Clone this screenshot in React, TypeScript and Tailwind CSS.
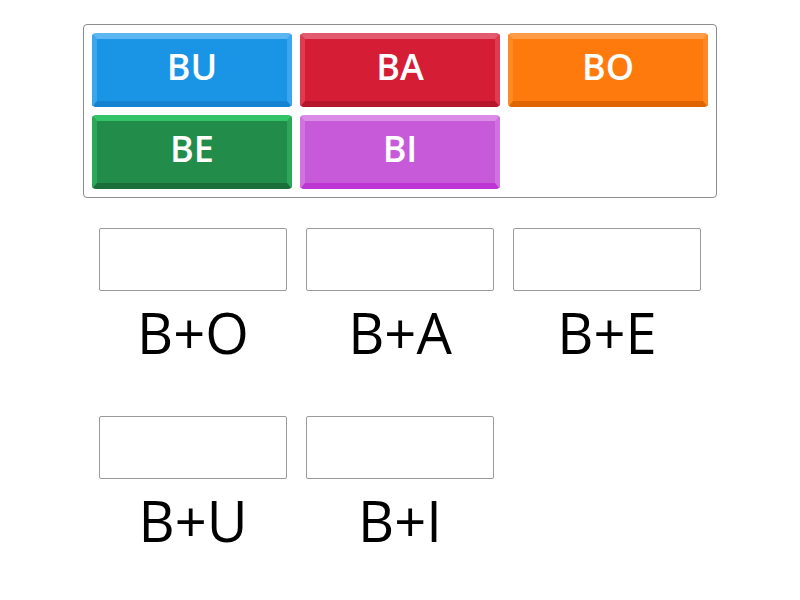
const tiles = [
  { label: 'BU', cls: 'bg-[#1a95e6] border-t-[#5cb6f1] border-x-[#3aa6ee] border-b-[#1583d2]' },
  { label: 'BA', cls: 'bg-[#d61d36] border-t-[#e35a6e] border-x-[#e03a50] border-b-[#b5162a]' },
  { label: 'BO', cls: 'bg-[#ff7a0c] border-t-[#ff9c45] border-x-[#ff8a25] border-b-[#de6500]' },
  { label: 'BE', cls: 'bg-[#228d4a] border-t-[#34c468] border-x-[#2aa858] border-b-[#1b6e39]' },
  { label: 'BI', cls: 'bg-[#c75ad9] border-t-[#da8ce7] border-x-[#d172e1] border-b-[#bd36d3]' },
]

const targets = ['B+O', 'B+A', 'B+E', 'B+U', 'B+I']

export default function App() {
  return (
    <div className="w-[800px] h-[600px] bg-white pt-6" style={{ fontFamily: '"Open Sans", "Noto Sans", sans-serif' }}>
      <div className="mx-auto w-[634px] h-[174px] border border-[#8c8c8c] rounded-[4px] p-2 grid grid-cols-3 gap-2 content-start">
        {tiles.map((t) => (
          <div
            key={t.label}
            className={`h-[74px] rounded-[4px] border-t-[6px] border-x-[5px] border-b-[6px] pb-[6px] flex items-center justify-center text-white font-semibold text-[36px] leading-none ${t.cls}`}
          >
            {t.label}
          </div>
        ))}
      </div>
      <div className="mx-auto mt-[30px] w-[621px] grid grid-cols-3 gap-y-[48px]">
        {targets.map((t) => (
          <div key={t} className="flex flex-col items-center">
            <div className="w-[188px] h-[63px] border border-[#9a9a9a] rounded-[2px]" />
            <div className="mt-[5px] text-[56px] leading-[72px] text-black">{t}</div>
          </div>
        ))}
      </div>
    </div>
  )
}
